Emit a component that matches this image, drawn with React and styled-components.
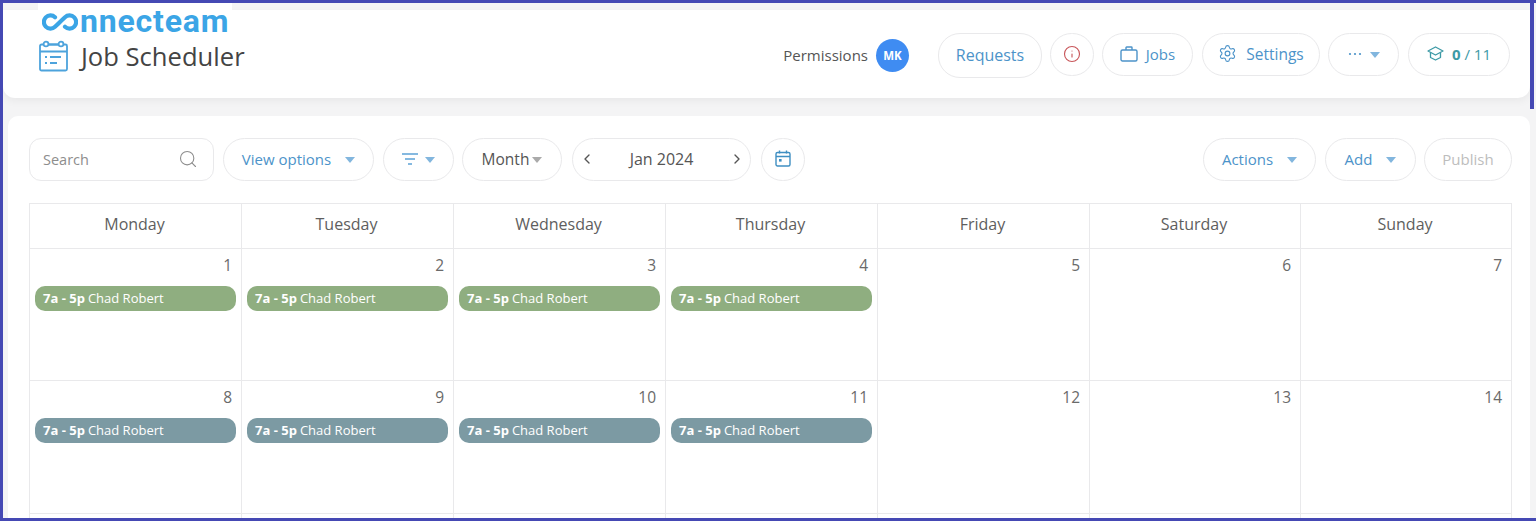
import styled, { createGlobalStyle } from 'styled-components'
import { Search, Info, Settings, ChevronLeft, ChevronRight } from 'lucide-react'

const GlobalStyle = createGlobalStyle`
  html, body {
    margin: 0;
    padding: 0;
    background: #f3f3f4;
    font-family: "Open Sans", "Liberation Sans", sans-serif;
  }
`

const Frame = styled.div`
  box-sizing: border-box;
  width: 1536px;
  height: 521px;
  overflow: hidden;
  background: #f4f4f5;
  border-top: 3px solid #4549b4;
  border-left: 3px solid #4549b4;
  border-bottom: 3px solid #4549b4;
`

const TopRow = styled.div`
  display: flex;
  height: 106px;
`

const RightRule = styled.div`
  width: 4px;
  margin-right: 2px;
  background: #4549b4;
`

const Header = styled.header`
  flex: 1;
  box-sizing: border-box;
  height: 88px;
  margin-top: 7px;
  padding: 0 20px 0 35px;
  display: flex;
  justify-content: space-between;
  background: #fff;
  border-radius: 0 0 12px 12px;
  box-shadow: 0 3px 8px rgba(0, 0, 0, 0.05);
`

const Brand = styled.div`
  display: flex;
  flex-direction: column;
`

const Logo = styled.div`
  display: flex;
  align-items: center;
  width: 194px;
  height: 25px;
  margin-top: -7px;
  padding: 12px 0 0 4px;
  box-sizing: border-box;
  background: #fff;
`

const LogoText = styled.span`
  margin-left: 2px;
  font-family: Roboto, "Liberation Sans", sans-serif;
  font-size: 32px;
  font-weight: 700;
  letter-spacing: 0.8px;
  line-height: 17px;
  color: #3ba5e6;
`

const TitleRow = styled.div`
  display: flex;
  align-items: center;
  gap: 13px;
  margin-top: 11px;
  padding-left: 1px;
`

const Title = styled.h1`
  margin: 2px 0 0;
  font-size: 25.6px;
  font-weight: 400;
  line-height: 32px;
  color: #444;
`

const HeaderNav = styled.nav`
  display: flex;
  align-items: flex-start;
  padding-top: 23px;
`

const Permissions = styled.span`
  margin: 6px 8px 0 0;
  font-size: 15px;
  line-height: 33px;
  color: #555;
`

const Avatar = styled.span`
  width: 33px;
  height: 33px;
  margin: 6px 29px 0 0;
  display: flex;
  align-items: center;
  justify-content: center;
  border-radius: 50%;
  background: #3f8cf2;
  color: #fff;
  font-size: 11.5px;
  font-weight: 700;
`

const Pill = styled.button`
  box-sizing: border-box;
  width: ${p => p.$w}px;
  height: ${p => p.$h || 43}px;
  margin-right: ${p => p.$gap ?? 8}px;
  padding: 0 0 2px;
  display: flex;
  align-items: center;
  justify-content: center;
  gap: ${p => p.$inner ?? 8}px;
  background: #fff;
  border: 1px solid #e9e9eb;
  border-radius: ${p => p.$radius || 22}px;
  font-family: inherit;
  font-size: ${p => p.$size || 15}px;
  color: ${p => p.$color || '#4c93c9'};
`

const Caret = styled.span`
  width: 0;
  height: 0;
  margin-top: 2px;
  border-left: 5px solid transparent;
  border-right: 5px solid transparent;
  border-top: 6px solid ${p => p.$color || '#82b6de'};
`

const Progress = styled.span`
  color: #3d9aa6;
  b {
    font-weight: 700;
  }
`

const Main = styled.main`
  box-sizing: border-box;
  height: 412px;
  margin: 7px 0 0 5px;
  width: 1522px;
  padding: 22px 0 0 21px;
  background: #fff;
  border-radius: 10px 10px 0 0;
`

const Toolbar = styled.div`
  display: flex;
  align-items: center;
  height: 43px;
  width: 1483px;
`

const Spacer = styled.div`
  flex: 1;
`

const SearchBox = styled.div`
  box-sizing: border-box;
  width: 185px;
  height: 43px;
  margin-right: 9px;
  padding: 0 15px 1px 13px;
  display: flex;
  align-items: center;
  justify-content: space-between;
  border: 1px solid #e9e9eb;
  border-radius: 12px;
  font-size: 14.5px;
  color: #8d8d8d;
`

const DateLabel = styled.span`
  width: 110px;
  text-align: center;
  font-size: 16px;
  color: #555;
`

const Calendar = styled.div`
  box-sizing: border-box;
  width: 1483px;
  margin-top: 22px;
  display: grid;
  grid-template-columns: repeat(5, 212px) repeat(2, 211px);
  grid-template-rows: 44px 132px 133px 40px;
  border-top: 1px solid #e9e9eb;
  border-right: 1px solid #e9e9eb;
`

const DayName = styled.div`
  box-sizing: border-box;
  padding: 0 2px 5px 0;
  display: flex;
  align-items: center;
  justify-content: center;
  border-left: 1px solid #e9e9eb;
  font-size: 16px;
  color: #5e5e5e;
`

const Cell = styled.div`
  box-sizing: border-box;
  padding: 6px 5px 0 5px;
  border-left: 1px solid #e9e9eb;
  border-top: 1px solid #e9e9eb;
`

const DayNumber = styled.div`
  padding-right: 4px;
  text-align: right;
  font-size: 15.5px;
  line-height: 21px;
  color: #6a6a6a;
`

const Shift = styled.div`
  box-sizing: border-box;
  height: 25px;
  margin-top: 10px;
  padding: 0 8px 1px;
  display: flex;
  align-items: center;
  gap: 3px;
  border-radius: 10px;
  background: ${p => p.$color};
  color: #fff;
  font-size: 13px;
  white-space: nowrap;
  b {
    font-weight: 700;
  }
`

const days = ['Monday', 'Tuesday', 'Wednesday', 'Thursday', 'Friday', 'Saturday', 'Sunday']
const weeks = [
  { start: 1, color: '#8fae80' },
  { start: 8, color: '#7c9aa3' },
]

const LogoMark = () => (
  <svg width="36" height="18" viewBox="0 0 36 18" fill="none" stroke="#3ba5e6" strokeWidth="4.2" strokeLinecap="round">
    <path d="M13 4.2A6.6 6.6 0 1 0 13 13.8C15.5 11.5 20.5 6.5 23 4.2A6.6 6.6 0 1 1 23 13.8" />
  </svg>
)

const SchedulerIcon = () => (
  <svg width="29" height="32" viewBox="0 0 29 32" fill="none" stroke="#4da3dc" strokeWidth="1.8">
    <rect x="1" y="4.5" width="27" height="26" rx="1.5" />
    <path d="M1 11.5h27M9.5 4.5h10" />
    <circle cx="7" cy="4" r="2.4" fill="#fff" />
    <circle cx="22" cy="4" r="2.4" fill="#fff" />
    <path d="M6 17h2M11 17h11M6 23h2M11 23h7" />
  </svg>
)

const BagIcon = () => (
  <svg width="18" height="16" viewBox="0 0 18 16" fill="none" stroke="#4c93c9" strokeWidth="1.4" strokeLinejoin="round">
    <rect x="1" y="4" width="16" height="11" rx="1.5" />
    <path d="M6 4V1.6C6 1.2 6.3 1 6.6 1h4.8c.3 0 .6.2.6.6V4" />
  </svg>
)

const FilterIcon = () => (
  <svg width="16" height="12" viewBox="0 0 16 12" fill="none" stroke="#5da3d6" strokeWidth="1.4">
    <path d="M0 1h16M3 6h10M6 11h4" />
  </svg>
)

const DotsIcon = () => (
  <svg width="14" height="4" viewBox="0 0 14 4" fill="#4c93c9">
    <circle cx="2" cy="2" r="1.1" />
    <circle cx="7" cy="2" r="1.1" />
    <circle cx="12" cy="2" r="1.1" />
  </svg>
)

const CapIcon = () => (
  <svg width="17" height="15" viewBox="0 0 17 15" fill="none" stroke="#3d9aa6" strokeWidth="1.3" strokeLinejoin="round">
    <path d="M8.5 1L16 5 8.5 9 1 5z" />
    <path d="M3.5 6.5v5L8.5 14l5-2.5v-5" />
  </svg>
)

const DateIcon = () => (
  <svg width="16" height="17" viewBox="0 0 16 17" fill="none" stroke="#3f8fc2" strokeWidth="1.4">
    <rect x="1" y="2.5" width="14" height="13.5" rx="1.5" />
    <path d="M1 6.5h14M4.5 0.5v3M11.5 0.5v3" />
    <rect x="4" y="9" width="2.6" height="2.6" fill="#3f8fc2" stroke="none" />
  </svg>
)

export default function App() {
  return (
    <Frame>
      <GlobalStyle />
      <TopRow>
        <Header>
          <Brand>
            <Logo>
              <LogoMark />
              <LogoText>nnecteam</LogoText>
            </Logo>
            <TitleRow>
              <SchedulerIcon />
              <Title>Job Scheduler</Title>
            </TitleRow>
          </Brand>
          <HeaderNav>
            <Permissions>Permissions</Permissions>
            <Avatar>MK</Avatar>
            <Pill $w={104} $h={45} $size={16}>Requests</Pill>
            <Pill $w={44}><Info size={18} color="#c8565a" strokeWidth={1.5} /></Pill>
            <Pill $w={91} $gap={9}><BagIcon />Jobs</Pill>
            <Pill $w={118} $inner={9} $size={15.5}><Settings size={19} strokeWidth={1.4} />Settings</Pill>
            <Pill $w={71} $gap={9}><DotsIcon /><Caret /></Pill>
            <Pill $w={102} $gap={0} $color="#3d9aa6"><CapIcon /><Progress><b>0</b> / 11</Progress></Pill>
          </HeaderNav>
        </Header>
        <RightRule />
      </TopRow>
      <Main>
        <Toolbar>
          <SearchBox>Search<Search size={20} color="#8d8d8d" strokeWidth={1.3} /></SearchBox>
          <Pill $w={151} $gap={9} $inner={14}>View options<Caret /></Pill>
          <Pill $w={71} $inner={7}><FilterIcon /><Caret /></Pill>
          <Pill $w={100} $gap={10} $inner={3} $size={15.5} $color="#555">Month<Caret $color="#aaa" /></Pill>
          <Pill $w={179} $gap={10} $inner={12} $color="#555">
            <ChevronLeft size={16} />
            <DateLabel>Jan 2024</DateLabel>
            <ChevronRight size={16} />
          </Pill>
          <Pill $w={44} $gap={0}><DateIcon /></Pill>
          <Spacer />
          <Pill $w={113} $gap={9} $inner={14}>Actions<Caret /></Pill>
          <Pill $w={91} $inner={14}>Add<Caret /></Pill>
          <Pill $w={88} $gap={0} $color="#bdbdbd">Publish</Pill>
        </Toolbar>
        <Calendar>
          {days.map(day => <DayName key={day}>{day}</DayName>)}
          {weeks.map(week =>
            days.map((day, i) => (
              <Cell key={day + week.start}>
                <DayNumber>{week.start + i}</DayNumber>
                {i < 4 && (
                  <Shift $color={week.color}><b>7a - 5p</b> Chad Robert</Shift>
                )}
              </Cell>
            ))
          )}
          {days.map(day => <Cell key={day} />)}
        </Calendar>
      </Main>
    </Frame>
  )
}
